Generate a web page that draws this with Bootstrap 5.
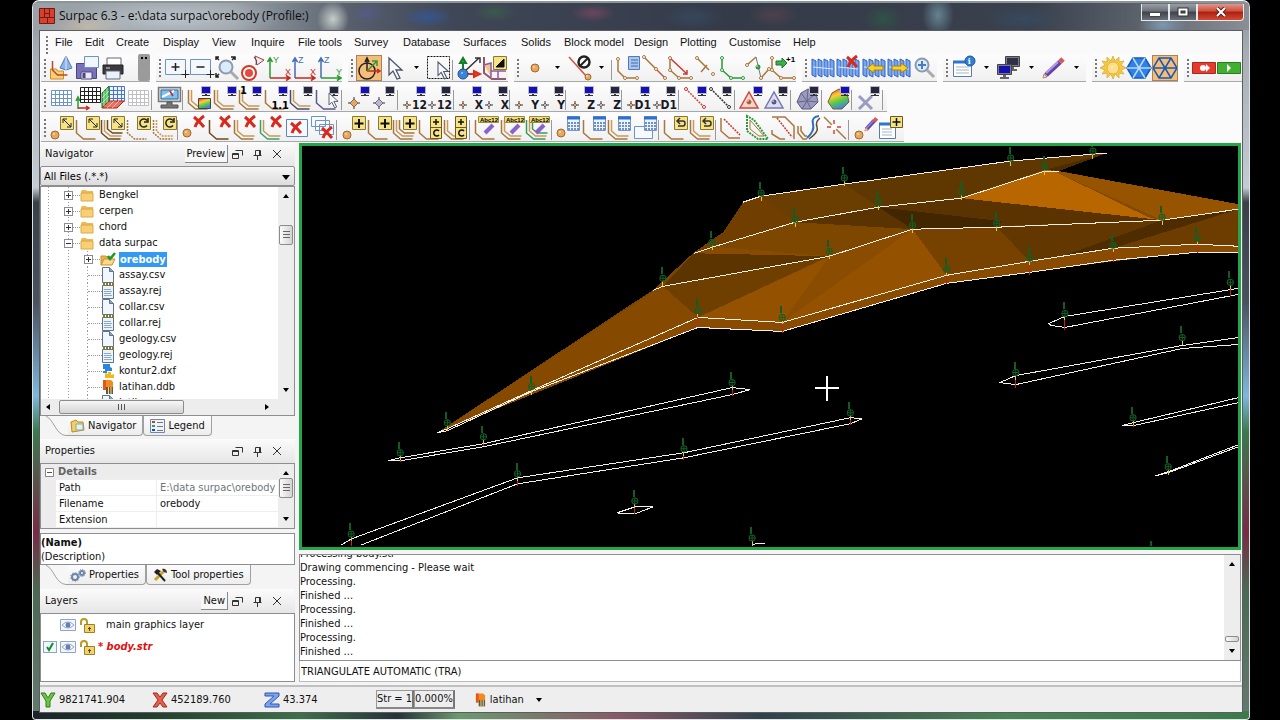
<!DOCTYPE html>
<html lang="en">
<head>
<meta charset="utf-8">
<meta name="viewport" content="width=device-width, initial-scale=1">
<title>Surpac 6.3</title>
<link href="https://cdn.jsdelivr.net/npm/bootstrap@5.3.0/dist/css/bootstrap.min.css" rel="stylesheet">
<style>
:root{--ui:"DejaVu Sans Condensed","DejaVu Sans",sans-serif;--edge:#8e8e92}
body{background:#000;font-family:var(--ui);font-size:11px;line-height:16px;color:#111}
button,input,select{font:inherit;color:inherit}
button{background:none;border:0;padding:0}
.app-win{margin:0 30px 0 32px;height:100vh;padding:2px 6px 6px;overflow:hidden;border-radius:7px 7px 4px 4px;
 background:
 linear-gradient(90deg,#1c2228,#23402c 10%,#3d7048 22%,#26323a 30%,#6b9a6d 35%,#8a5966 48%,#30414a 60%,#4b8354 80%,#3d7a4a) bottom/100% 8px no-repeat,
 linear-gradient(#8b939b,#a9afb5 8%,#c3ccd2 26%,#3a4048 28%,#4a5260 42%,#7fb8dc 55%,#3a7a4c 60%,#7a2a44 74%,#4a6a50 82%,#667a70)}
.win-frame{border:1px solid #dde2e6;border-top-color:#fff}
.titlebar{height:27px;margin:0 -6px;padding:1px 5px 0 6px;
 background:
 radial-gradient(ellipse 16px 18px at 300px 16px,#dfe6e0cc,transparent),
 radial-gradient(ellipse 110px 22px at 140px 15px,#c3ccd2cc,transparent),
 radial-gradient(ellipse 40px 14px at 55px 24px,#d2bfa6aa,transparent),
 radial-gradient(ellipse 16px 10px at 335px 10px,#555b9c88,transparent),
 radial-gradient(ellipse 26px 10px at 395px 14px,#31589acc,transparent),
 radial-gradient(ellipse 22px 10px at 462px 9px,#3a6a4a88,transparent),
 radial-gradient(ellipse 22px 9px at 560px 10px,#8c4a6699,transparent),
 radial-gradient(ellipse 30px 12px at 660px 14px,#384c68aa,transparent),
 radial-gradient(ellipse 26px 12px at 740px 12px,#5a4450aa,transparent),
 radial-gradient(ellipse 20px 14px at 850px 16px,#2d5c46aa,transparent),
 radial-gradient(ellipse 16px 22px at 905px 12px,#6f94a4cc,transparent),
 radial-gradient(ellipse 40px 14px at 990px 16px,#34506a99,transparent),
 radial-gradient(ellipse 24px 14px at 1130px 22px,#7d98b0,transparent),
 linear-gradient(90deg,#9aa2a8,#98a0a6 200px,#565e6c 320px,#3f4656 420px,#343a48 700px,#3a404c 1000px,#5a606a 1100px,#8a8f96)}
.title-text{font:12px/23px "Open Sans","Noto Sans",sans-serif;color:#0c0c10}
.cap{height:17px;border:1px solid #e6e8ea;border-top:0;background:linear-gradient(#9a9fa6,#6c7078 45%,#3e424a 50%,#6b7078);display:grid;place-items:center}
.cap-s{width:28px}
.cap-x{width:47px;border-radius:0 0 4px 0;background:linear-gradient(#e0978a,#cc4f3c 45%,#ac1f10 50%,#d24a34)}
.client{background:#f4f4f4;border:1px solid #5a5e64;min-height:0}
.menus{height:23px;padding-left:3px;background:#fafafa;font:11px/22px "Liberation Sans",Arial,sans-serif}
.menus a{color:#111;text-decoration:none}
.menus .grip{margin:4px 4px 0 0}
.tools{background:#fbfbfb}
.trow{gap:6px;padding-left:1px}
.tgroup{height:28px;border-bottom:1px solid #a8a8a8;margin-bottom:2px;background:linear-gradient(#fdfdfd,#f0f0f0);display:flex;align-items:center;flex:0 0 auto}
.trow:last-child .tgroup{margin-bottom:0}
.grip{flex:0 0 8px;height:20px;background:radial-gradient(circle at 4px 2px,#777 1px,transparent 1px) 0 0/8px 4px}
.tb{flex:1 1 0;min-width:0;height:26px;display:block}
.tb svg{display:block;width:26px;height:26px;overflow:visible}
.tb-on{background:#f6bd78;outline:1px solid #a9825a;outline-offset:-1px}
.tsep{flex:0 0 5px;height:20px;border-left:1px solid #999;margin-top:4px}
.tarrow{flex:0 0 19px;display:grid;place-items:center}
.more{flex:0 0 12px;margin-left:11px;height:27px;background:#9b9b9b;border-radius:2px;color:#111;font-size:9px;line-height:6px;display:flex;justify-content:center;padding-top:2px;align-self:flex-start}
.side{flex:0 0 255px}
.dock-head{height:24px;background:linear-gradient(#fbfbfb,#e6e6e6);padding:0 12px 0 5px}
.dock-btn{background:#f7f7f7;border-right:1px solid #888;border-bottom:1px solid #888;height:18px;padding:0 2px;line-height:16px}
.boxed{background:#fff;border:1px solid var(--edge)}
.filter{height:20px;padding:0 3px;border:1px solid var(--edge);border-radius:2px;appearance:none;width:100%;background:linear-gradient(#f7f7f7,#dcdcdc);line-height:17px;color:#000}
.filter-wrap{position:relative}
.filter-wrap svg{position:absolute;right:5px;top:9px;pointer-events:none}
.vbar{flex:0 0 16px;background:#ededed;display:flex;flex-direction:column;align-items:center}
.thumb{border:1px solid #8c8c8c;border-radius:2px;background:linear-gradient(90deg,#fafafa,#d4d4d4)}
.tree{list-style:none;margin:0;padding:0;overflow:hidden;min-height:0;flex:1 1 0;background:
 repeating-linear-gradient(#999 0 1px,#fff 1px 3px) 7px 0/1px 100% no-repeat,
 repeating-linear-gradient(#999 0 1px,#fff 1px 3px) 27px 0/1px 100% no-repeat}
.tree li{height:16px;display:flex;align-items:center;white-space:nowrap}
.lv1{padding-left:23px}.lv2{padding-left:43px}
.lv2{background:repeating-linear-gradient(#999 0 1px,#fff 1px 3px) 46px 0/1px 100% no-repeat}
.exp{width:9px;height:9px;border:1px solid #8b8b9b;background:#fff;display:block}
.exp svg{display:block}
.dash{width:7px;border-top:1px dotted #999}
.picked{background:#3399f3;color:#fff;font-weight:700;padding:0 1px;margin-left:-1px;line-height:15px}
.dtab{height:20px;border:1px solid #a0a0a0;border-top:0;background:linear-gradient(#fcfcfc,#ededed);border-radius:0 0 4px 4px;padding:0 6px;display:flex;align-items:center;gap:3px}
.dtab-first{border-left:0;border-radius:0 0 4px 0;padding-left:2px}
.slant{margin-left:6px}
.gap-end{margin-bottom:3px}
.props{border-collapse:separate;border-spacing:0;width:100%;table-layout:fixed}
.props td,.props th{height:16px;line-height:15px;padding:0 0 0 3px;border-bottom:1px solid #eee;white-space:nowrap;font-weight:400}
.props th{border-left:15px solid #ececec;border-right:1px solid #eee}
.props .grp{background:#ececec;font-weight:700;color:#666;padding-left:4px;border-left:0}
.canvas{border:3px solid #27a349;background:#000;flex:1 1 0;min-height:0;margin-top:1px}
.canvas svg{display:block;width:100%;height:100%}
.log{height:107px;border:1px solid var(--edge)}
.log-lines{line-height:14px;padding:0 0 1px;display:flex;flex-direction:column;justify-content:flex-end;overflow:hidden}
.cmd{height:21px;border:1px solid #bbb;border-top:0;padding:0 1px;width:100%;background:#fff;outline:0}
.status{height:27px;background:#eee;border-top:2px solid #c0c0c0}
.coord{flex:0 0 112px;gap:3px}
.sbtn{border:1px solid #999;border-right:2px solid #777;border-bottom:2px solid #888;height:19px;line-height:16px;padding:0;white-space:nowrap}
.vis{appearance:none;width:14px;height:12px;border:1px solid #8fa6c4;background:#eef6ff;margin:0;display:block}
.vis:checked{background:#eef6ff url("data:image/svg+xml,%3Csvg xmlns='http://www.w3.org/2000/svg' viewBox='0 0 12 10'%3E%3Cpath d='M3 5l2 3 4-7' fill='none' stroke='%23188a28' stroke-width='2'/%3E%3C/svg%3E") center/12px 10px}
.vis-none{visibility:hidden}
.layer{height:22px;padding-left:2px;gap:3px}
</style>
</head>
<body>
<div class="app-win win-frame d-flex flex-column">
 <header class="titlebar d-flex flex-shrink-0">
  <svg class="mt-1 me-1" width="16" height="16" viewBox="0 0 16 16"><path fill="#d8402c" stroke="#6e1c14" d="M.5.5h15v15H.5z"/><path fill="none" stroke="#6e1c14" d="M5.500.5v9h-5M10.500.5v9M5.500 9.500h10M8.500 9.500v6M5 5.500h5"/></svg>
  <h1 class="title-text m-0 flex-grow-1">Surpac 6.3 - e:\data surpac\orebody (Profile:)</h1>
  <div class="d-flex align-items-start">
   <button class="cap cap-s" aria-label="Minimize"><svg width="12" height="9"><path fill="#fff" stroke="#444" d="M.5 4.500h11v4H.5z"/></svg></button>
   <button class="cap cap-s" aria-label="Maximize"><svg width="12" height="10"><path fill="none" stroke="#333" stroke-width="4" d="M2.500 2.500h7v5h-7z"/><path fill="none" stroke="#fff" stroke-width="2" d="M2.500 2.500h7v5h-7z"/></svg></button>
   <button class="cap cap-x" aria-label="Close"><svg width="12" height="10"><path stroke="#5a2018" stroke-width="4" d="M2 1l8 8M10 1l-8 8"/><path stroke="#fff" stroke-width="2" d="M2 1l8 8M10 1l-8 8"/></svg></button>
  </div>
 </header>
 <div class="client d-flex flex-column flex-grow-1">
  <nav class="menus d-flex flex-shrink-0" id="menus" aria-label="Main menu"></nav>
  <div class="tools flex-shrink-0" id="tools"></div>
  <main class="d-flex flex-grow-1 gap-1" style="min-height:0">
   <aside class="side d-flex flex-column">
    <div class="dock-head d-flex align-items-center flex-shrink-0"><span class="flex-grow-1">Navigator</span><button class="dock-btn">Preview</button><span class="dock-tools"></span></div>
    <div class="filter-wrap flex-shrink-0"><select class="filter" aria-label="File filter"><option>All Files (.*.*)</option></select><svg width="8" height="5"><path d="M0 0h8L4 5z"/></svg></div>
    <div class="boxed d-flex flex-column flex-grow-1" style="min-height:0">
     <div class="d-flex flex-grow-1" style="min-height:0">
      <ul class="tree" id="tree"></ul>
      <div class="vbar justify-content-between py-1"><svg width="6" height="10"><path d="M0 7l3-4 3 4z"/></svg>
       <div class="thumb mb-auto mt-4" style="width:14px;height:20px"><svg width="12" height="18"><path stroke="#666" d="M3 5.500h7M3 8.500h7M3 11.500h7"/></svg></div>
       <svg width="6" height="10"><path d="M0 3l3 4 3-4z"/></svg></div>
     </div>
     <div class="d-flex align-items-center flex-shrink-0" style="height:16px;background:#ededed"><svg class="ms-1 me-2" width="6" height="8"><path d="M5 1L1 4l4 3z"/></svg><div class="thumb" style="width:125px;height:14px;background:linear-gradient(#f6f6f6,#d4d4d4)"><svg class="d-block" width="123" height="12"><path stroke="#555" d="M58.500 3v6M61.500 3v6M64.500 3v6"/></svg></div><svg class="ms-auto me-4" width="6" height="8"><path d="M1 1l4 3-4 3z"/></svg></div>
    </div>
    <div class="d-flex flex-shrink-0 gap-end"><svg class="slant" width="22" height="20"><path d="M0 0c8 4 10 19 20 19.500h2V0z" fill="#f6f6f6"/><path d="M0 0c8 4 10 19 20 19.500h2" fill="none" stroke="#a0a0a0"/></svg>
     <button class="dtab dtab-first"><svg width="15" height="14" viewBox="0 0 15 14"><path d="M1 3l5-2 2 2h5l1 8-12 2z" fill="#f2cf62" stroke="#b98a22"/><path d="M6 5h7v6H6z" fill="#e2f2f4" stroke="#8aa6a4"/></svg>Navigator</button>
     <button class="dtab"><svg width="15" height="14" viewBox="0 0 15 14"><path d="M.5.5h14v13H.5z" fill="#eef3fa" stroke="#7187a8"/><path d="M2 2h3v2H2z" fill="#d33"/><path d="M2 6h3v2H2z" fill="#2a4"/><path d="M2 10h3v2H2z" fill="#24c"/><path d="M7 3.500h6M7 7.500h6M7 11.500h6" stroke="#777"/></svg>Legend</button></div>

    <div class="dock-head d-flex align-items-center flex-shrink-0"><span class="flex-grow-1">Properties</span><span class="dock-tools"></span></div>
    <div class="boxed d-flex flex-shrink-0 overflow-hidden" style="height:66px">
     <table class="props"><colgroup><col style="width:116px"><col></colgroup>
      <tr><td class="grp" colspan="2"><svg class="me-1" width="9" height="9"><path fill="#fff" stroke="#888" d="M.5.5h8v8h-8z"/><path stroke="#555" d="M2 4.500h5"/></svg>Details</td></tr>
      <tr><th>Path</th><td class="text-secondary">E:\data surpac\orebody</td></tr>
      <tr><th>Filename</th><td>orebody</td></tr>
      <tr><th>Extension</th><td></td></tr>
     </table>
     <div class="vbar py-1"><svg width="6" height="10"><path d="M0 7l3-4 3 4z"/></svg><div class="thumb" style="width:14px;height:20px"><svg width="12" height="18"><path stroke="#666" d="M3 5.500h7M3 8.500h7M3 11.500h7"/></svg></div><svg class="mt-auto" width="6" height="10"><path d="M0 3l3 4 3-4z"/></svg></div>
    </div>
    <div class="boxed flex-shrink-0 mt-1" style="height:32px;line-height:14px;padding:2px 0"><b>(Name)</b><br>(Description)</div>
    <div class="d-flex flex-shrink-0 mb-1"><svg class="slant" width="22" height="20"><path d="M0 0c8 4 10 19 20 19.500h2V0z" fill="#f6f6f6"/><path d="M0 0c8 4 10 19 20 19.500h2" fill="none" stroke="#a0a0a0"/></svg>
     <button class="dtab dtab-first"><svg width="16" height="14" viewBox="0 0 16 14"><g fill="none" stroke="#6d86a8"><circle cx="5" cy="9" r="3" stroke-width="2"/><circle cx="5" cy="9" r="4.500" stroke-dasharray="1 2"/><circle cx="12" cy="5" r="2" stroke-width="2"/><circle cx="12" cy="5" r="3.500" stroke-dasharray="1 1"/></g></svg>Properties</button>
     <button class="dtab"><svg width="15" height="14" viewBox="0 0 15 14"><path d="M2 12l9-9" stroke="#c9a227" stroke-width="3"/><path d="M4 4l8 9" stroke="#222" stroke-width="2"/><path d="M1 4l3-3 4 2-4 4z" fill="#222"/><path d="M9 1c3-1 5 1 5 4l-3-1z" fill="#333"/></svg>Tool properties</button></div>

    <div class="dock-head d-flex align-items-center flex-shrink-0"><span class="flex-grow-1">Layers</span><button class="dock-btn">New</button><span class="dock-tools"></span></div>
    <div class="boxed flex-shrink-0 gap-end" style="height:69px" id="layers"></div>
   </aside>

   <section class="d-flex flex-column flex-grow-1" style="min-width:0;padding-right:1px">
    <div class="canvas"><svg id="scene" viewBox="302 147 936 400" preserveAspectRatio="xMinYMin slice" role="img" aria-label="Ore body model"></svg></div>
    <div class="log mt-1 bg-white d-flex flex-shrink-0">
     <div class="log-lines flex-grow-1"><div>Processing body.str</div><div>Drawing commencing - Please wait</div><div>Processing.</div><div>Finished ...</div><div>Processing.</div><div>Finished ...</div><div>Processing.</div><div>Finished ...</div></div>
     <div class="vbar py-1"><svg width="6" height="10"><path d="M0 7l3-4 3 4z"/></svg><div class="thumb mt-auto" style="width:14px;height:6px"></div><svg class="mt-1" width="6" height="10"><path d="M0 3l3 4 3-4z"/></svg></div>
    </div>
    <input class="cmd gap-end flex-shrink-0" aria-label="Command" value="TRIANGULATE AUTOMATIC (TRA)">
   </section>
  </main>
  <footer class="status d-flex align-items-center flex-shrink-0">
   <div class="coord d-flex align-items-center"><svg width="16" height="16"><path d="M1 1h4l3 5 3-5h4l-5 8v6H6V9z" fill="#6cc644" stroke="#2b7c1d"/></svg>9821741.904</div>
   <div class="coord d-flex align-items-center"><svg width="16" height="16"><path d="M1 1h4l3 4 3-4h4l-5 7 5 7h-4l-3-4-3 4H1l5-7z" fill="#e2604c" stroke="#a52a1c"/></svg>452189.760</div>
   <div class="coord d-flex align-items-center"><svg width="16" height="16"><path d="M1 1h14v3L6 12h9v3H1v-3l9-8H1z" fill="#7da2ee" stroke="#2a55b8"/></svg>43.374</div>
   <button class="sbtn">Str = 1</button><button class="sbtn">0.000%</button>
   <button class="d-flex align-items-center ms-3 gap-1"><svg class="ms-1" width="11" height="15" viewBox="0 0 12 15"><use href="#ddb"/></svg>latihan<svg class="ms-2" width="6" height="4"><path d="M0 0h6L3 4z"/></svg></button>
  </footer>
 </div>
</div>
<svg width="0" height="0" class="position-absolute"><defs>
 <g id="ddb"><path d="M1 1h8l2 2v5H1z" fill="#f58a1c"/><path d="M1 1h3v10H1z" fill="#e4571a"/><path d="M4 8h7v7H4z" fill="#6b5636"/><path d="M6.500 8v7M9 8v7" stroke="#f0d9a0"/></g>
 <g id="folder"><path d="M1 2.500L2 1h4l1 1h6v10H1z" fill="#f0b850"/><path d="M1 4h12v8H1z" fill="#f9cf75" stroke="#dca845"/></g>
 <g id="openf"><path d="M1 13V4h5l1 1h5v3" fill="#eeb24b" stroke="#c98d2e"/><path d="M1 13l3-6h11l-3 6z" fill="#fbd88b" stroke="#c98d2e"/><path d="M8 4l2 3 5-6" fill="none" stroke="#1a9a2c" stroke-width="2.500"/></g>
 <g id="csv"><path d="M.5.5h7l4 4v11H.5z" fill="#f2f7fd" stroke="#5d7390"/><path d="M7.500.5v4h4" fill="#8ba4c4" stroke="#5d7390"/></g>
 <g id="rej"><path d="M.5 2.500h11v13H.5z" fill="#eaf2fa" stroke="#5d7390"/><path d="M1 1.500h11" stroke="#8a7a1c" stroke-width="3" stroke-dasharray="2 1"/><path d="M2 6.500h7M2 8.500h8M2 10.500h7M2 12.500h8" stroke="#92a9c4"/></g>
 <g id="dxf"><path d="M1 1h7v3l2 1v3H5v2H1V8h2V6H1z" fill="#2b84de"/><path d="M3 10l3 1V9h3v3l3-1v4H3z" fill="#f2b91b"/></g>
</defs></svg>
<script src="https://cdn.jsdelivr.net/npm/bootstrap@5.3.0/dist/js/bootstrap.bundle.min.js"></script>
<script>
const el = id => document.getElementById(id);

/* Menu bar: label and the width of its slot */
el('menus').innerHTML = '<span class="grip"></span>' + [['File',30],['Edit',31],['Create',47],['Display',49],['View',39],['Inquire',47],['File tools',56],['Survey',49],['Database',60],['Surfaces',58],['Solids',43],['Block model',70],['Design',46],['Plotting',49],['Customise',64],['Help',40]]
 .map(([t, w]) => `<a href="#" style="width:${w}px">${t}</a>`).join('');

/* Icon parts, drawn on a 26 x 26 grid */
const p = (d, s, w = 1, f = 'none') => `<path d="${d}" stroke="${s}" stroke-width="${w}" fill="${f}"/>`;
const T = '#a9773c', D = '#6e4a1e';
const mon = c => `<path d="M14.500 1.500h9v7h-9z" fill="${c}" stroke="#b8b8c8"/><path d="M18 9h2v1h3v1h-8v-1h3z" fill="#333"/>`;
const B = mon('#1510b4'), K = mon('#25253c');
const ball = (x, y, r = 4, f = '#e9a75e', s = '#9b6a33') => `<circle cx="${x}" cy="${y}" r="${r}" fill="${f}" stroke="${s}"/><circle cx="${x - 1}" cy="${y - 1}" r="1" fill="#fff8"/>`;
const str = (n, c = T, x = 1, y = 5, dash = '') => Array.from({length: n}, (_, i) => `<path d="M${x + i * 3}.500 ${y}v${13 - i * 2}l${7 - i} ${6 - i}h${12 - i}" stroke="${i == 1 ? '#c79a58' : c}" stroke-width="1.500" fill="none" stroke-dasharray="${dash}"/>`).join('');
const badge = g => p('M11.500 1.500h13v13h-13z', '#8a7830', 1, '#f6e386') + g;
const expand = badge(p('M14 4l8 8M14 8V4h4M22 8v4h-4', '#222', 1));
const rot = badge(p('M21 5.500a4 4 0 1 0 0 5M22 3v4h-4', '#222', 1.500));
const plus = badge(p('M18 4v9M13.500 8.500h9', '#111', 2));
const undo = badge(p('M15 6h5q2 0 2 2.500t-2 2.500h-5M17 3l-3 3 3 3', '#333', 1.500));
const redx = p('M12 2q5 4 10 10M22 1q-7 5-9 11', '#d8291c', 3);
const cal = p('M11.500 1.500h12v14h-12z', '#7b95bd', 1, '#eef4fb') + p('M11 3h13', '#2a6fd4', 3) + p('M12 8h11M12 11h11M12 14h11', '#6b8fd0', 2, 'none').replace('/>', ' stroke-dasharray="2 1"/>');
const pencil = p('M9 18L19 7', '#6546a8', 5) + p('M9 17L18 7', '#a98ae0', 1.500) + p('M19 8l3-4', '#d65858', 5) + p('M7 20l2-4 2 3z', '#c98', 1, '#fc9');
const abc = `<path d="M4.500 1.500h20v6h-20z" fill="#efdc84" stroke="#a48d2e"/><text x="6" y="7" font-size="6" font-family="Liberation Sans" font-weight="700">Abc12</text>` + `<g transform="translate(2 2)">${p('M9 16l8-8', '#8a62cc', 4)}</g>`;
const cursor = (x, y, s = 1) => `<path transform="translate(${x} ${y}) scale(${s})" d="M0 0v17l4-4 4 8 3-1-4-8h6z" fill="#f7f9fc" stroke="#4c5468" stroke-width="1.300"/>`;
const axes = (a, ca, b, cb) => p('M4 23V5M1.500 7L4 3l2.500 4', ca, 1.500) + p('M4 23h19M20 20.500l4 2.500-4 2.500', cb, 1.500) + `<text x="7" y="8" font-size="9" font-family="Liberation Sans" fill="${ca}">${a}</text><text x="19" y="20" font-size="9" font-family="Liberation Sans" fill="${cb}">${b}</text>`;
const star = (x, y, f = '#f0a35a', r = 4) => p(`M${x - r - 2} ${y}h${2 * r + 4}M${x} ${y - r - 2}v${2 * r + 4}`, '#333') + `<path d="M${x - r} ${y}l${r}-${r} ${r} ${r}-${r} ${r}z" fill="${f}" stroke="#7a6a5a"/>`;
const grid = (s, f = '#fff') => p('M2.500 5.500h20v15h-20z', s, 1, f) + p('M6.500 5.500v15M10.500 5.500v15M14.500 5.500v15M18.500 5.500v15M2.500 9.500h20M2.500 13.500h20M2.500 17.500h20', s);
const num = (t, mo, f) => `<g>${star(5, 20, f, 2)}</g><text x="25" y="24" text-anchor="end" font-size="12" font-weight="700" font-family="DejaVu Sans Condensed, DejaVu Sans" fill="#181826">${t}</text>` + mo;
const slabs = p('M2 4l4 2v16l-4-2zM8 4l4 2v16l-4-2zM14 4l4 2v16l-4-2zM20 4l4 2v16l-4-2z', '#2c62c4', 1, '#74a6f0') + p('M3 12l20 2', '#dbe8ff');
const hexa = (f, s) => p('M7 3h12l6 10-6 10H7L1 13z', s, 1.500, f) + p('M7 3l12 20M19 3L7 23M1 13h24', s === '#175ab4' && f === '#2d82ea' ? '#bcd8fb' : s, 1.500);
const hexs = p('M6 8l7-4 8 4 2 9-7 7H7l-5-7z', '#5b5b7c', 1, '#9a9abf') + p('M6 8l6 8M13 4l-1 12M21 8l-9 8M23 17l-11-1M16 24l-4-8M7 24l5-8M2 17l10-1', '#65658a');
const dots = (a, c = T) => a.map(([x, y]) => `<circle cx="${x}" cy="${y}" r="1.500" fill="#fff" stroke="${c}"/>`).join('');
const zoomBox = m => p('M1.500 4.500h20v15h-20z', '#6e93c8', 1, '#f4f8fd') + p(m, '#222', 1.500) + p('M21.500 15v8M17.500 19.500h8', '#222');
const lens = (x, y) => p(`M${x + 5} ${y + 5}l7 7`, '#aaa', 3) + `<circle cx="${x}" cy="${y}" r="6.500" fill="#dcebf9" stroke="#8a9ab0" stroke-width="2"/>`;
const doc = p('M2.500 6.500h18v15h-18z', '#5b7ba8', 1, '#fdfeff') + p('M2 7h19', '#2f74d0', 3) + p('M5 12h13M5 15h13M5 18h13', '#a8b4c4');
const disp = (x, y, c) => `<g transform="translate(${x} ${y})"><path d="M.5.5h14v10H.5z" fill="#7a7a88" stroke="#444"/><path d="M2 2h11v7H2z" fill="${c}"/><path d="M6 11h3v2h3v2H3v-2h3z" fill="#666"/></g>`;

const I = {
 open: p('M1.500 14h6l1 2h6v8h-13z', '#c98d2e', 1, '#f9cf75') + p('M3.500 6v9l5 5h10', '#b84a30', 1.500) + p('M11 13l6-12 6 12-6 2z', '#4f79b8', 1, '#8fb2e6') + p('M17 1v14', '#dbe8fa'),
 save: p('M1.500 8.500h18l2 2v13h-20z', '#4a4480', 1, '#7a70b8') + p('M9.500 1.500h14v11h-14z', '#6e93c8', 1, '#f2f7fd') + p('M6 17h11v7H6z', '#4a4480', 1, '#e8e8f4') + p('M9 18v5', '#4a4480', 3),
 print: p('M6 3h14v8H6z', '#667', 1, '#fff') + p('M2 10h20v9H2z', '#222', 1, '#3a3a40') + p('M5 16h14v8H5z', '#667', 1, '#e8f2ff') + p('M5 13h4', '#ddd'),
 zin: zoomBox('M11.500 8v8M7.500 12h8'), zout: zoomBox('M7.500 12h8'),
 zall: lens(11, 12) + p('M1 5V2h3M1 2l3 3M16 2h4v3M20 2l-3 3M1 18v4h3M1 22l3-3', '#222', 1.500),
 zpt: `<circle cx="9" cy="18" r="7" fill="#fff" stroke="#d4382a" stroke-width="2"/><circle cx="9" cy="18" r="4" fill="#e64b3c"/>` + p('M15 1l9 4-7 5z', '#b43a2e', 1, '#e8eef8') + p('M14 2q4 3 2 8', '#445'),
 yx: axes('Y', '#2a9a35', 'X', '#c8281e'), zx: axes('Z', '#3f6fb5', 'X', '#c8281e'), zy: axes('Z', '#3f6fb5', 'Y', '#2a9a35'),
 orbit: `<circle cx="11" cy="16" r="8" fill="none" stroke="#222" stroke-width="1.500"/>` + p('M11 16V4M9 7l2-4 2 4', '#222', 1.500) + p('M11 16h12M21 14l3 2-3 2', '#c8281e', 1.500) + p('M11 16l9-9M16 6h5v5', '#2a9a35', 1.500),
 cur: cursor(7, 3), marquee: `<rect x="1.500" y="1.500" width="22" height="22" fill="none" stroke="#111" stroke-dasharray="2 1"/>` + cursor(12, 7, .8),
 move3: p('M6 18L22 3M18 3h5v5', '#333', 1.500) + p('M6 18V8M3 8l3-5 3 5z', '#167c2a', 2, '#25a83c') + p('M6 19h11v-3l6 3-6 3v-3', '#d83020', 2, '#ee4030') + ball(6, 19, 5, '#3b83d6', '#1e4c8c'),
 tri: p('M2 2v16l8 6h14', '#8c5a6e', 2) + p('M2 10l7-2v14M9 16h15M16 16v8', '#8c5a9e', 1.500, '#f3c690') + badge(p('M14 12l8-8v8z', '#111', 1, '#111')),
 pt: ball(13, 13), noline: p('M2 2l18 20', '#d05040', 1.500) + ball(21, 22, 3) + `<circle cx="17" cy="7" r="5.500" fill="none" stroke="#222" stroke-width="2.500"/>` + p('M13 11l8-8', '#222', 2),
 l1: p('M2 4v12l7 7h12', T, 1.500) + dots([[2, 4], [9, 23], [21, 23]]) + p('M12.500 1.500h11v13h-11z', '#4f79b8', 1, '#a8c6f0') + p('M15 5h7M15 8h7M15 11h7', '#416aa8'),
 l2: p('M2 2l13 13', T, 1.500) + p('M15 15l8 8', '#d05040', 1.500) + dots([[2, 2], [14, 14], [23, 23]]),
 l3: p('M2 3v12l9 8h12', T, 1.500) + p('M2 3l17 16M15 19h4v-4', '#cc3a30', 1.500) + dots([[2, 3], [2, 15], [11, 23], [23, 23]]),
 l4: p('M4 3l12 12M8 17l6-7', T, 1.500) + dots([[4, 3], [20, 19]]),
 l5: p('M3 3v12l9 8h12', '#2a9a35', 1.500) + dots([[3, 3], [3, 15], [12, 23], [24, 23]], '#2a9a35'),
 l6: p('M2 10l9-8M16 23l8-9', T, 1.500) + p('M11 2l5 21', '#777', 1) + dots([[2, 10], [24, 14], [16, 23]]) + ball(13, 12, 2, '#3aa84a', '#267a33'),
 l7: p('M2 3v12l9 8h13', T, 1.500) + dots([[2, 3], [2, 15], [11, 23], [24, 23]]) + p('M6 6h6V3l5 5-5 5v-3H6z', '#23762c', 1, '#38b04a') + '<text x="16" y="7" font-size="8" font-family="Liberation Sans" font-weight="700">+1</text>',
 s1: slabs, s2: slabs + redx, s3: slabs + p('M6 13l7-5v3h9v4h-9v3z', '#a8820c', 1, '#f7cf2e'), s4: slabs + p('M22 13l-7-5v3H6v4h9v3z', '#a8820c', 1, '#f7cf2e'),
 s5: lens(10, 10) + p('M6 10h8M10 6v8', '#4a7ac4', 2),
 info: doc + ball(19, 6, 5, '#2f7fd6', '#1b559c') + '<text x="17" y="9" font-size="9" font-weight="700" fill="#fff" font-family="Liberation Serif">i</text>',
 disps: disp(9, 1, '#303048') + disp(1, 9, '#1510b4'),
 pen: p('M5 20L19 7', '#6546a8', 5) + p('M5 18L17 7', '#b79be8', 2) + p('M19 7l3-3', '#d65858', 5) + p('M2 23l1-4 3 3z', '#b87', 1, '#fd9'),
 sun: p('M13 1l2 5 4-4v5l5-1-3 4 5 3-5 2 3 4-5-1v5l-4-4-2 5-2-5-4 4v-5l-5 1 3-4-5-2 5-3-3-4 5 1V2l4 4z', '#e0b54a', 1, '#f5c743') + ball(13, 13, 6, '#fbe08a', '#e5b43a'),
 hexf: hexa('#2d82ea', '#175ab4'), hexw: hexa('none', '#175ab4'),
 rec: p('M.5 7.500h23v11H.5z', '#a32a20', 1, '#e83a2c') + '<circle cx="11" cy="13" r="3" fill="#fff"/><path d="M14 9l4 4-4 4z" fill="#fff"/>',
 play: p('M.5 7.500h23v11H.5z', '#2a7a20', 1, '#40b030') + '<path d="M10 9l4 4-4 4z" fill="#fff"/>',
 g1: grid('#6e93c8'), g2: p('M3 24V14M1 16l2-4 2 4', '#2a9a35', 1.500) + p('M3 23h10M11 21l3 2-3 2', '#c8281e', 1.500) + `<g transform="translate(3 -3)">${grid('#222')}</g>`,
 g3: p('M9.500 1.500h15v15h-15z', '#4a78c4', 1, '#eef4ff') + p('M13.500 1v15M17.500 1v15M21.500 1v15M9 5.500h15M9 9.500h15M9 13.500h15', '#4a78c4') + p('M9 1L2 8v15l7-7z', '#187a28', 1, '#52b85a') + p('M2 23l7-7h15l-7 7z', '#a82818', 1, '#ea7060') + p('M4 6v15M7 3v15M2 13l7-7M2 18l7-7M7 23l7-7M12 23l7-7', '#fff8'),
 g4: grid('#c0c0c4'), screen: p('M2.500 2.500h22v14h-22z', '#777', 1.500, '#ddd') + p('M5 5h17v9H5z', '#2a6aa4', 1, '#7ec0ee') + p('M6 12l12-6', '#fff', 2) + p('M14 6l3 5', '#c22', 1.500) + p('M11 17h5v3h6v3H5v-3h6z', '#555', 1, '#777'),
 d1: str(2) + p('M11.500 13.500h12v10h-12z', '#444', 1, 'url(#rb)') + B, d2: str(2) + B, d3: str(2) + '<text x="2" y="9" font-size="11" font-weight="700" font-family="DejaVu Sans Condensed">1</text>' + B,
 d4: str(1) + '<text x="25" y="24" text-anchor="end" font-size="11" font-weight="700" font-family="DejaVu Sans Condensed, DejaVu Sans">1.1</text>' + B, d5: str(2, '#4a4a78') + K, d6: str(1, '#5a5a90') + K + cursor(14, 8, .7),
 n1: star(8, 18) + B, n2: star(8, 18, '#b6b6e6') + K,
 q1: p('M3 4l18 18', '#d04a40', 1.500).replace('/>', ' stroke-dasharray="2 1"/>') + dots([[3, 4], [21, 22]], '#c33') + B, q2: p('M3 4l18 18', '#333', 1.500).replace('/>', ' stroke-dasharray="2 1"/>') + dots([[3, 4], [21, 22]], '#333') + K,
 t1: p('M1 23L10 7l9 16z', '#d0483c', 1.500, '#fbd4cc') + ball(10, 17, 2, '#b4483c') + B, t2: p('M1 23L10 7l9 16z', '#7878b0', 1.500, '#dcdcf2') + ball(10, 17, 2, '#66669a', '#446') + K,
 h1: hexs + K, h2: p('M6 8l7-4 8 4 2 9-7 7H7l-5-7z', '#7a5a2c', 1, 'url(#rb)') + B, xx: p('M3 11l13 13M16 11L3 24', '#9a9ac4', 3) + K,
 e1: ball(6, 20) + expand, e2: str(1) + expand, e3: str(3, D) + expand, e4: str(1, T, 1, 5, '2 1') + rot, e5: str(2, T, 1, 5, '2 1') + rot,
 x1: ball(5, 18) + redx, x2: str(1, D) + redx, x3: str(2) + redx, x4: str(2, '#3aa06a') + redx, x5: p('M1.500 4.500h21v17h-21z', '#5b86c8', 1, '#f6faff') + '<g transform="translate(-6 6)">' + redx + '</g>',
 x6: p('M1.500 1.500h14v10h-14zM5.500 5.500h14v10h-14zM9.500 9.500h14v10h-14z', '#6e93c8', 1, '#f6faff') + '<g transform="translate(0 11)">' + redx + '</g>',
 a1: ball(6, 20) + plus, a2: str(1) + plus, a3: str(3) + plus,
 a4: str(1) + p('M12.500 1.500h11v22h-11zM12.500 12.500h11', '#6b5a1c', 1, '#f6e386') + p('M18 4v6M15 7h6M21 16a3 3 0 1 0 0 4', '#111', 1.500),
 a5: str(2) + p('M12.500 1.500h11v22h-11zM12.500 12.500h11', '#6b5a1c', 1, '#f6e386') + p('M18 4v6M15 7h6M21 16a3 3 0 1 0 0 4', '#111', 1.500),
 b1: str(1) + abc, b2: str(2) + abc, b3: str(3, '#3a9a5a') + abc,
 c1: ball(5, 18) + cal, c2: str(1) + cal, c3: str(2) + cal, c4: p('M1.500 11.500h18v12h-18z', '#6e93c8', 1, '#f6faff') + cal, u1: str(1) + undo, u2: str(2) + undo,
 k1: p('M1 3v13l8 7h11', T, 1.500) + p('M4 4l16 16', '#cc3a30', 1.500).replace('/>', ' stroke-dasharray="2 1"/>'),
 k2: p('M2 1v15l11 8h10L9 5z', '#2f9a3c', 2).replace('/>', ' stroke-dasharray="2 1"/>') + p('M5 5v9l9 7h5z', T),
 k3: p('M1 2h13l9 9v13M1 15v4l8 5h5', T, 1.500) + p('M6 3l15 19', '#cc3a30', 1.500).replace('/>', ' stroke-dasharray="2 1"/>'),
 k4: p('M1 11v7l5 6h4M4 11v5l4 5h2', T, 1.500) + p('M22 1q-8 1-6 8t-6 14', '#2a6fc4', 2) + p('M23 3q-5 4-3 9t-8 12', '#6b4a2a', 1.500),
 k5: p('M2 2l22 22', T, 1.500) + p('M12 5v14M5 12h14', '#d0483c', 1.500) + '<circle cx="12" cy="12" r="3" fill="#fff"/>',
 w1: ball(6, 20) + `<g transform="translate(6 0) scale(.8)">${pencil}</g>`,
 w2: p('M1.500 8.500h16v15h-16z', '#5b7ba8', 1, '#fdfeff') + p('M1 9h17', '#2f74d0', 3) + p('M4 14h10M4 17h10M4 20h10', '#a8b4c4') + `<g transform="translate(2 0)">${p('M10.500 1.500h12v11h-12z', '#6b5a1c', 1, '#f6e386') + p('M16.500 3v8M12.500 7h8', '#111', 1.500)}</g>`
};
for (const [k, t] of [['12', '12'], ['X', 'X'], ['Y', 'Y'], ['Z', 'Z'], ['D1', 'D1']]) { I['m' + k] = num(t, B, '#f0a35a'); I['o' + k] = num(t, K, '#b6b6e6'); }

/* Toolbar rows: [width, items]; "|" separator, "v" drop-down arrow, "*" pressed, ">" overflow */
const rows = [
 [[109, 'open save print >'], [186, 'zin zout zall zpt yx zx zy'], [160, '*orbit cur v marquee | move3 tri'], [282, 'pt v noline v | l1 l2 l3 l4 l5 l6 l7'], [135, 's1 s2 s3 s4 s5'], [143, 'info v disps v pen v'], [86, 'sun hexf *hexw'], [58, 'rec play']],
 [[846, 'g1 g2 g3 g4 | screen | d1 d2 d3 d4 d5 d6 | n1 n2 | m12 o12 | mX oX | mY oY | mZ oZ | mD1 oD1 | q1 q2 | t1 t2 | h1 | h2 | xx |']],
 [[863, 'e1 e2 e3 e4 e5 | x1 x2 x3 x4 x5 x6 | a1 a2 a3 a4 a5 | b1 b2 b3 | c1 c2 c3 c4 | u1 u2 | k1 k2 k3 k4 k5 | w1 w2']]
];
const item = k => k == '|' ? '<span class="tsep"></span>'
 : k == 'v' ? '<button class="tarrow" aria-label="More options"><svg width="5" height="3"><path d="M0 0h5L2.500 3z"/></svg></button>'
 : k == '>' ? '<button class="more" aria-label="More tools"><svg width="8" height="4"><path d="M1 1h2v2H1zM5 1h2v2H5z"/></svg></button>'
 : `<button class="tb${k[0] == '*' ? ' tb-on' : ''}" aria-label="${k.replace('*', '')}"><svg viewBox="0 0 26 26">${I[k.replace('*', '')]}</svg></button>`;
el('tools').innerHTML = '<svg width="0" height="0" class="position-absolute"><linearGradient id="rb" x2=".4" y2="1"><stop stop-color="#e33"/><stop offset=".4" stop-color="#fc3"/><stop offset=".7" stop-color="#5c4"/><stop offset="1" stop-color="#48d"/></linearGradient></svg>'
 + rows.map(r => '<div class="trow d-flex overflow-hidden">' + r.map(([w, s]) => `<div class="tgroup" style="width:${w}px"><span class="grip"></span>${s.split(' ').map(item).join('')}</div>`).join('') + '</div>').join('');

/* Dock header tools: float, pin, close */
document.querySelectorAll('.dock-tools').forEach(n => {
 n.className = 'd-flex ms-1';
 n.style.gap = '9px';
 n.innerHTML = ['M3.500 1.500h7v5M.5 4.500h6v5h-6zM.5 5.500h6', 'M3.500 1.500h5v5h-5zM7.500 1v5M1.500 6.500h8M5.500 7v4', 'M1 1l8 8M9 1l-8 8']
  .map((d, i) => `<button aria-label="${['Float', 'Pin', 'Close'][i]}"><svg class="d-block" width="11" height="11"><path d="${d}" fill="none" stroke="#333"/></svg></button>`).join('');
});

/* File tree */
const box = plus => `<span class="exp"><svg width="7" height="7"><path d="M1 3.500h5${plus ? 'M3.500 1v5' : ''}" stroke="#333"/></svg></span>`;
el('tree').innerHTML = [['Bengkel', 1], ['cerpen', 1], ['chord', 1], ['data surpac', 0]].map(([t, c]) => `<li class="lv1">${box(c)}<span class="dash"></span><svg class="me-1" width="15" height="13"><use href="#folder"/></svg>${t}</li>`).join('')
 + `<li class="lv2">${box(1)}<span class="dash"></span><svg class="me-1" width="16" height="15"><use href="#openf"/></svg><span class="picked">orebody</span></li>`
 + ['assay.csv', 'assay.rej', 'collar.csv', 'collar.rej', 'geology.csv', 'geology.rej', 'kontur2.dxf', 'latihan.ddb', 'latihan.dsc'].map(t => `<li class="lv2"><span class="dash" style="width:14px;margin-left:4px"></span><svg class="me-1" width="13" height="16"><use href="#${{ dsc: 'csv' }[t.slice(-3)] || t.slice(-3)}"/></svg>${t}</li>`).join('');

/* Layers */
const eye = '<svg width="16" height="12"><path d="M.5.5h15v11H.5z" fill="#eef6ff" stroke="#8fa6c4"/><path d="M2 6q6-6 12 0-6 6-12 0z" fill="#fff" stroke="#a79aa8"/><circle cx="8" cy="6" r="2.500" fill="#5b7fd0"/></svg>';
const lock = '<svg width="16" height="15"><path d="M2 7V4q0-3 3-3t3 3v4" fill="none" stroke="#b99a2a" stroke-width="2"/><path d="M5.500 6.500h10v8h-10z" fill="#f3d368" stroke="#a08020"/><path d="M10.500 9v4M9 10.500h3" stroke="#444"/></svg>';
el('layers').innerHTML = `<div class="layer d-flex align-items-center"><input type="checkbox" class="vis vis-none" id="l0" aria-label="Show main graphics layer"><button aria-label="View">${eye}</button><button aria-label="Lock">${lock}</button><label for="l0" class="ms-2">main graphics layer</label></div>
<div class="layer d-flex align-items-center"><input type="checkbox" class="vis" id="l1" checked><button aria-label="View">${eye}</button><button aria-label="Lock">${lock}</button><label for="l1" class="fst-italic fw-bold" style="color:#e01010">* body.str</label></div>`;

/* 3D view: shaded facets, section strings, drill collars */
const facets = [
 ['#7a4400', '437,433 653,290 692,254 722,233 742,203 760,197 1105,154 1057,172 1236,205 1236,253 1195,253 1111,262 1028,273 945,284 781,332 697,328'],
 ['#854900', '437,433 662,286 697,318 697,328'],
 ['#5c3400', '662,287 693,254 828,257'], ['#6f3f00', '662,287 828,257 707,314 697,318'],
 ['#945200', '697,318 828,257 911,230 945,276 781,323'], ['#8a4c00', '828,257 781,323 911,230'],
 ['#703f00', '742,203 760,197 794,223 693,254 722,233'], ['#7e4700', '693,254 794,223 911,230 828,257'], ['#884c00', '693,254 720,248 828,257'],
 ['#5f3700', '760,197 1009,162 1105,154 1043,171 960,198 877,208 794,223'], ['#6a3d00', '760,197 843,185 877,208 794,223'], ['#4d2c00', '1043,171 1105,154 1057,172'],
 ['#5a3300', '794,223 877,208 960,199 1160,221 911,230'], ['#422600', '877,208 1000,222 995,228 911,230'],
 ['#b86700', '960,199 1043,171 1057,172 1160,221'], ['#965400', '1050,171 1236,205 1236,210 1160,221'], ['#844a00', '1050,171 1160,221 1146,218'],
 ['#774200', '911,230 995,228 1028,262 945,276'], ['#623700', '995,228 1160,221 1111,249 1028,262'], ['#6d3d00', '1160,221 1236,210 1236,253 1111,249'], ['#4e2c00', '1160,221 1236,210 1111,249 1060,257'],
 ['#884b00', '531,391 697,318 781,323 945,276 1028,262 1111,249 1195,245 1236,247 1236,253 1195,253 1111,262 1028,273 945,284 781,332 697,328']];
const strings = ['742,203 760,197 843,185 1009,162 1105,154', '693,254 711,248 794,223 877,208 960,199 1043,172 1057,172', '652,291 662,287 828,257 911,230 995,228 1160,221 1236,210',
 '437,433 447,429 531,391 697,318 781,323 945,276 1028,262 1111,249 1195,245 1236,247', '437,433 447,431 531,392 697,328 781,332 945,284 1028,273 1111,261 1195,253 1236,253',
 '388,461 400,458 483,444 731,388 749,390 731,395 483,447 400,461 388,461', '341,545 351,539 517,478 683,453 849,418 861,419 849,424 683,458 517,484 361,545', '616,513 634,507 652,507 634,514 616,513', '751,545 757,543 764,544',
 '1236,289 1063,317 1047,324 1049,326 1063,328 1236,295', '1236,338 1180,346 1014,376 998,383 1014,385 1180,349 1236,345', '1236,398 1131,423 1120,426 1131,426 1236,403', '1236,445 1166,472 1153,476 1166,473 1236,447'];
/* collar x, y, and length of the red trace below it */
const collars = [[760,194,0],[843,179,0],[1009,159,0],[1091,152,0],[1043,168,0],[877,203,0],[960,193,0],[794,220,0],[711,243,0],[662,279,0],[828,252,0],[911,226,0],[995,224,0],[697,311,10],[781,318,9],[945,270,8],[1028,259,10],[1111,246,10],[1160,218,0],[1195,239,8],[447,423,0],[531,387,0],[731,383,6],[400,453,2],[483,437,2],[517,474,5],[351,534,5],[683,449,4],[849,413,5],[634,501,6],[751,538,0],[1228,283,7],[1063,314,10],[1180,338,0],[1014,373,8],[1131,418,2],[1166,467,0]];
el('scene').innerHTML = '<g shape-rendering="crispEdges">' + facets.map(([c, s]) => `<polygon points="${s}" fill="${c}"/>`).join('')
 + strings.map(s => `<polyline points="${s}" fill="none" stroke="#f4f0e8"/>`).join('')
 + collars.map(([x, y, r]) => `<path d="M${x - 1} ${y - 11}v7" stroke="#135c26" stroke-width="2"/><path d="M${x} ${y + 3}v5" stroke="#e6c840"/>` + (r ? `<path d="M${x} ${y + 7}v${r}" stroke="#c8201c"/>` : '')).join('') + '</g>'
 + collars.map(([x, y]) => `<circle cx="${x}" cy="${y}" r="3" fill="none" stroke="#126028"/><path d="M${x - 3} ${y}h6M${x} ${y - 3}v6" stroke="#126028"/>`).join('')
 + '<path d="M814 388.500h24M825.500 376v25" stroke="#fff" stroke-width="2" shape-rendering="crispEdges"/><path d="M1149 541v5" stroke="#135c26" stroke-width="2"/>';
</script>
</body>
</html>
